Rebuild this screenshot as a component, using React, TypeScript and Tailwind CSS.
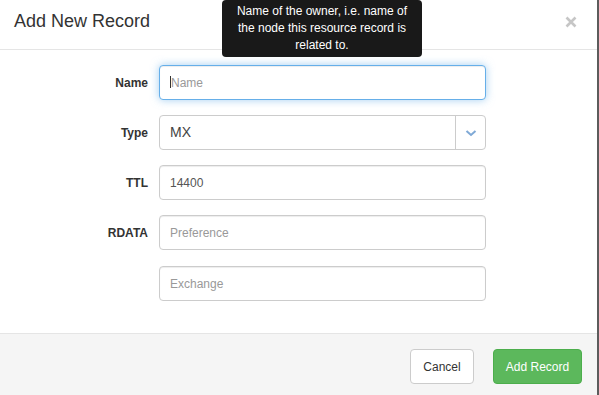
import React from "react";

const font = { fontFamily: '"Liberation Sans", Arial, sans-serif' };

function Row({ label, children, className = "" }: { label?: string; children: React.ReactNode; className?: string }) {
  return (
    <div className={"flex items-center " + className}>
      <div className="w-[148px] text-right text-[12px] font-bold text-[#333]">{label}</div>
      <div className="ml-[11px] w-[327px]">{children}</div>
    </div>
  );
}

function TextInput({ value, placeholder }: { value?: string; placeholder?: string }) {
  return (
    <input
      readOnly
      defaultValue={value}
      placeholder={placeholder}
      className="block h-[35px] w-full rounded-[4px] border border-[#ccc] bg-white px-[10px] text-[12px] text-[#555] shadow-[inset_0_1px_1px_rgba(0,0,0,0.075)] outline-none placeholder:text-[#999]"
      style={font}
    />
  );
}

export default function App() {
  return (
    <div className="flex h-[395px] w-[599px] overflow-hidden bg-[#5c5c5c]" style={font}>
      <div className="relative flex w-[597px] flex-col bg-white">
        {/* header */}
        <div className="flex h-[50px] shrink-0 items-start justify-between border-b border-[#e5e5e5] pl-[14px] pr-[20px]">
          <h4 className="pt-[9px] text-[18px] leading-[25px] text-[#333]">Add New Record</h4>
          <svg width="12" height="12" viewBox="0 0 12 12" className="mt-[16px]">
            <path d="M1.5 1.5 L10.5 10.5 M10.5 1.5 L1.5 10.5" stroke="#c6c6c6" strokeWidth="2.6" strokeLinecap="butt" />
          </svg>
        </div>

        {/* tooltip */}
        <div className="absolute left-[222px] top-0 w-[200px] rounded-[4px] bg-[#191919] px-[8px] pb-[3px] pt-[3px] text-center text-[12px] leading-[17px] text-white">
          Name of the owner, i.e. name of
          <br />
          the node this resource record is
          <br />
          related to.
        </div>

        {/* body */}
        <div className="flex flex-col gap-[15px] pt-[15px]">
          <Row label="Name">
            <div className="relative">
              <input
                readOnly
                placeholder="Name"
                className="block h-[35px] w-full rounded-[4px] border border-[#66afe9] bg-white px-[11px] text-[12px] text-[#555] shadow-[inset_0_1px_1px_rgba(0,0,0,0.075),0_0_8px_rgba(102,175,233,0.6)] outline-none placeholder:text-[#999]"
                style={font}
              />
              <span className="absolute left-[11px] top-[11px] h-[12px] w-px bg-[#333]" />
            </div>
          </Row>
          <Row label="Type">
            <div className="flex h-[35px] w-full rounded-[4px] border border-[#ccc] bg-white">
              <div className="flex flex-1 items-center pl-[10px] text-[14px] text-[#444]">MX</div>
              <div className="flex w-[30px] items-center justify-center border-l border-[#ccc]">
                <svg width="12" height="8" viewBox="0 0 12 8">
                  <path d="M1.5 2 L6 6 L10.5 2" fill="none" stroke="#7fa9d6" strokeWidth="2" />
                </svg>
              </div>
            </div>
          </Row>
          <Row label="TTL">
            <TextInput value="14400" />
          </Row>
          <Row label="RDATA">
            <TextInput placeholder="Preference" />
          </Row>
          <Row className="mt-[1px]">
            <TextInput placeholder="Exchange" />
          </Row>
        </div>

        {/* footer */}
        <div className="mt-[32px] flex flex-1 items-start justify-end gap-[19px] border-t border-[#e5e5e5] bg-[#f5f5f5] pr-[15px] pt-[15px]">
          <button className="h-[35px] w-[64px] rounded-[4px] border border-[#ccc] bg-white text-[12px] text-[#333]" style={font}>
            Cancel
          </button>
          <button className="h-[35px] w-[89px] rounded-[4px] border border-[#4cae4c] bg-[#5cb85c] text-[12px] text-white" style={font}>
            Add Record
          </button>
        </div>
      </div>
    </div>
  );
}
